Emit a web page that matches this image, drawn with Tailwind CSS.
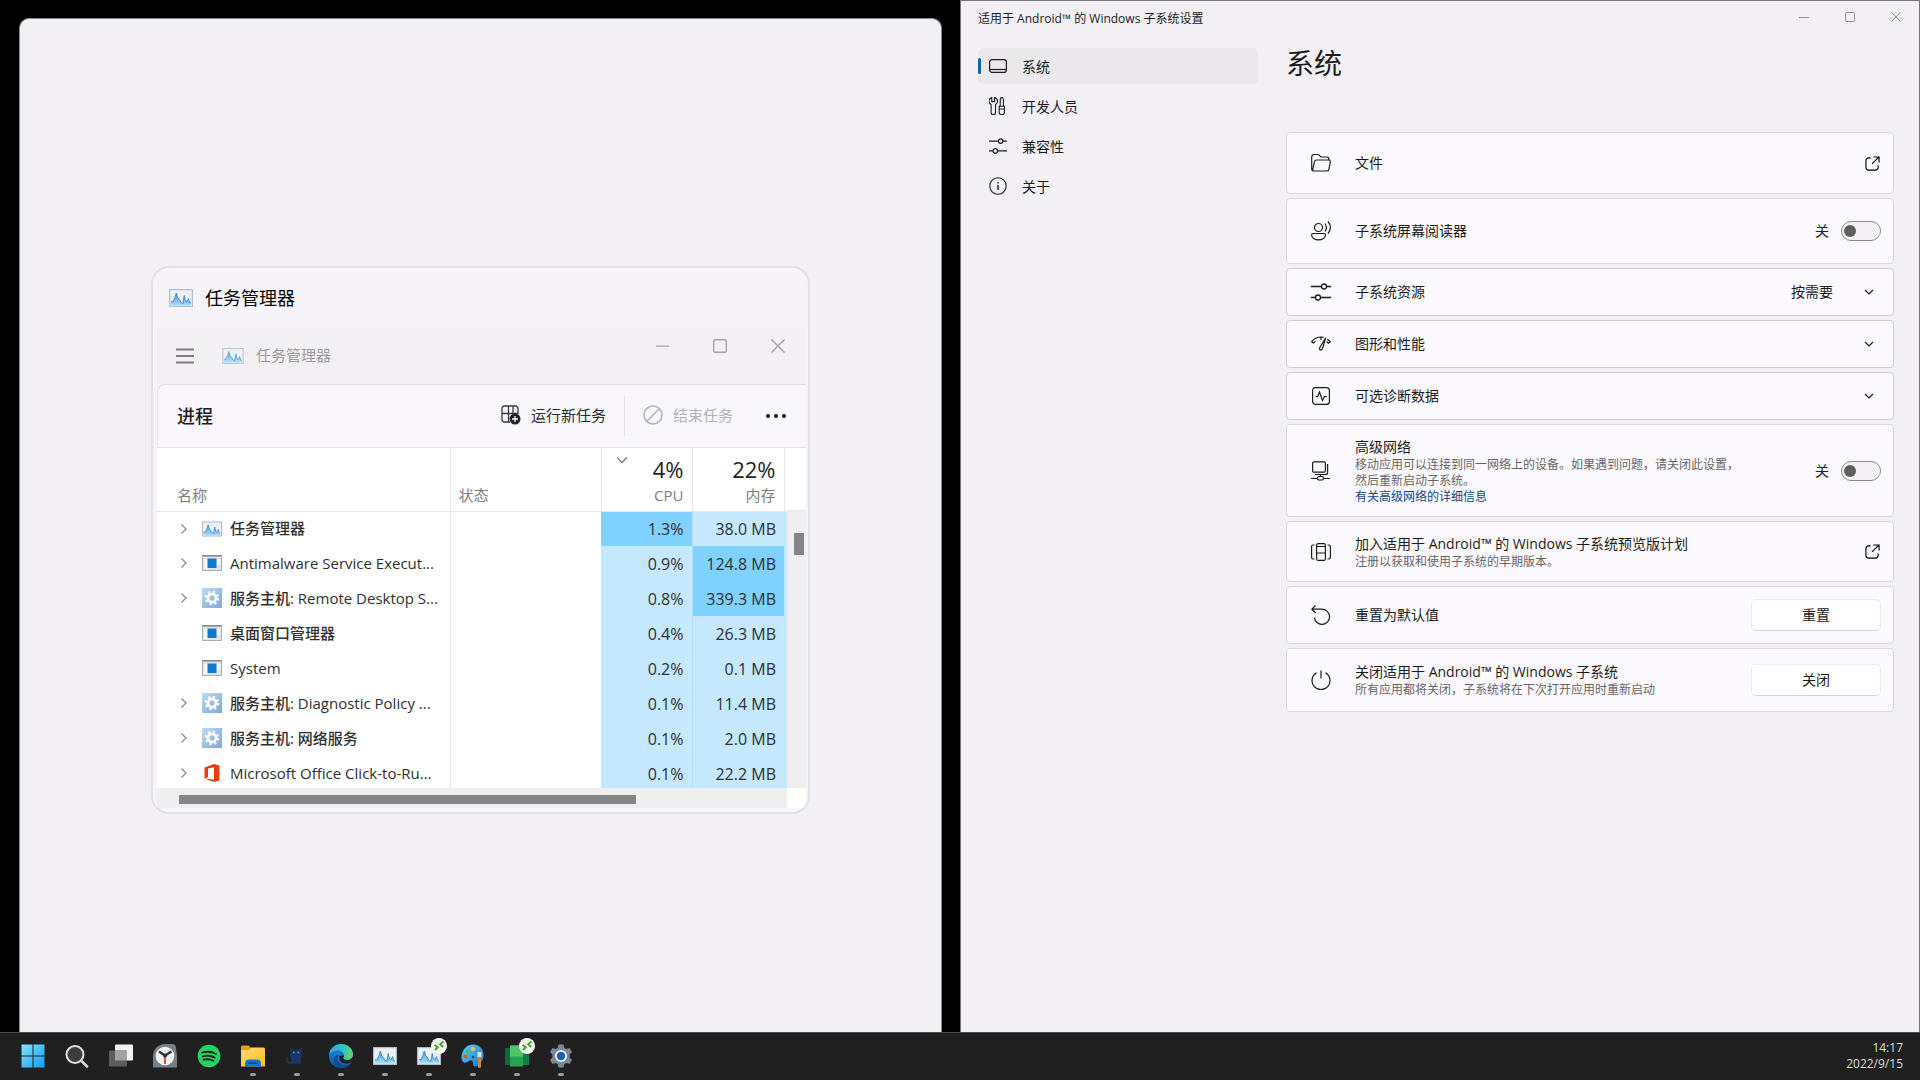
<!DOCTYPE html>
<html lang="zh-CN">
<head>
    <meta charset="UTF-8">
    <meta name="viewport" content="width=device-width, initial-scale=1.0">
    <title>适用于 Android™ 的 Windows 子系统设置</title>
    <script src="https://cdn.jsdelivr.net/npm/@tailwindcss/browser@4"></script>
</head>
<body class="flex h-screen flex-col overflow-hidden bg-black font-['Open_Sans','Noto_Sans_CJK_SC',sans-serif] text-sm text-[#1b1b1b]">

    <!-- 共用图标 -->
    <svg class="absolute size-0" aria-hidden="true">
        <defs>
            <linearGradient id="g-win" gradientUnits="userSpaceOnUse" x1="0" y1="0" x2="24" y2="24"><stop offset="0" stop-color="#8ae4fd"/><stop offset="1" stop-color="#0a9bfa"/></linearGradient>
            <linearGradient id="g-chart" x1="0" y1="0" x2="0" y2="1"><stop offset="0" stop-color="#2e8fd8"/><stop offset="1" stop-color="#a5dcfb"/></linearGradient>
            <linearGradient id="g-gear" x1="0" y1="0" x2="1" y2="1"><stop offset="0" stop-color="#bfdcf2"/><stop offset="1" stop-color="#7ea6dc"/></linearGradient>
            <linearGradient id="g-edge1" x1="0" y1="0" x2="1" y2="0"><stop offset="0" stop-color="#2ba8e6"/><stop offset=".6" stop-color="#35c1c6"/><stop offset="1" stop-color="#62dc54"/></linearGradient>
            <linearGradient id="g-edge2" x1="0" y1="0" x2="0" y2="1"><stop offset="0" stop-color="#1c8fe0"/><stop offset="1" stop-color="#0d57a8"/></linearGradient>
            <linearGradient id="g-folder" x1="0" y1="0" x2="1" y2="1"><stop offset="0" stop-color="#ffdd6b"/><stop offset="1" stop-color="#fdbb2a"/></linearGradient>
            <linearGradient id="g-paint" x1="0" y1="0" x2="1" y2="1"><stop offset="0" stop-color="#5bd0f6"/><stop offset="1" stop-color="#1578cf"/></linearGradient>
        </defs>
        <symbol id="i-taskmgr" viewBox="0 0 24 18">
            <rect x=".6" y=".6" width="22.800" height="16.800" fill="#edf1f5" stroke="#b3bcc5" stroke-width="1.200"/>
            <path d="M2 16.500v-4l2 .5 2-4.500 1.300-4.500 1.400 5 1.300 1 2 3.500 2 1 1.200-8 1.300 5.500 1.500 1 1.500-3.500 1 4 1.500 .5v2.500z" fill="url(#g-chart)" opacity=".9"/>
            <path d="M2 12.500l2 .5 2-4.500 1.300-4.500 1.400 5 1.300 1 2 3.500 2 1 1.200-8 1.300 5.500 1.500 1 1.500-3.500 1 4 1.500 .5" fill="none" stroke="#3b8fd0" stroke-width="1"/>
        </symbol>
        <symbol id="i-window" viewBox="0 0 20 16">
            <rect x=".5" y=".5" width="19" height="15" fill="#e3e6e9" stroke="#a9adb1"/>
            <path d="M.5 .8h19" stroke="#85898d" stroke-width="1.600"/>
            <path d="M2 4h4v10H2zM14 4h4v6h-4z" fill="#f6f8fa"/>
            <rect x="5.500" y="3.500" width="9" height="9.500" fill="#0f78d0"/>
        </symbol>
        <symbol id="i-service" viewBox="0 0 20 20">
            <rect width="20" height="20" fill="url(#g-gear)"/>
            <circle cx="10" cy="10" r="4" fill="none" stroke="#fff" stroke-width="2.600"/>
            <circle cx="10" cy="10" r="6.200" fill="none" stroke="#fff" stroke-width="2" stroke-dasharray="2.400 2.470"/>
        </symbol>
        <symbol id="i-office" viewBox="0 0 20 20">
            <path d="M2.500 4.500L12 1l5.500 1.600v14.800L12 19l-9.500-3.500 9.500 1V4.200L6 5.600v8.600l-3.500 1.300z" fill="#e8400f"/>
        </symbol>
        <symbol id="i-right" viewBox="0 0 8 12"><path d="M1.500 1.500L6 6l-4.500 4.500" fill="none" stroke="#8f8f8f" stroke-width="1.400"/></symbol>
        <symbol id="i-down" viewBox="0 0 10 10"><path d="M1 3l4 4 4-4" fill="none" stroke="currentColor" stroke-width="1.200"/></symbol>
        <symbol id="i-sliders" viewBox="0 0 20 20">
            <g fill="none" stroke="currentColor" stroke-width="1.300">
                <path d="M0 4.500h10.500M15.500 4.500H20M0 15.500h4.500M9.500 15.500H20"/><circle cx="13" cy="4.500" r="2.500"/><circle cx="7" cy="15.500" r="2.500"/>
            </g>
        </symbol>
        <symbol id="i-external" viewBox="0 0 16 16">
            <path d="M6 2H4a3 3 0 0 0-3 3v7a3 3 0 0 0 3 3h7a3 3 0 0 0 3-3v-2M9 1h6v6M15 1L7.500 8.500" fill="none" stroke="currentColor" stroke-width="1.200"/>
        </symbol>
        <symbol id="i-min" viewBox="0 0 10 10"><path d="M0 5.500h10" stroke="currentColor" fill="none"/></symbol>
        <symbol id="i-max" viewBox="0 0 10 10"><rect x=".5" y=".5" width="9" height="9" rx="1" stroke="currentColor" fill="none"/></symbol>
        <symbol id="i-close" viewBox="0 0 10 10"><path d="M.3 .3l9.400 9.400M9.700 .3L.3 9.700" stroke="currentColor" fill="none"/></symbol>
        <symbol id="i-remote" viewBox="0 0 16 16">
            <circle cx="8" cy="8" r="8" fill="#f5f5f3"/>
            <path d="M3.500 7l3.200 2.300L4 12M12.500 3.500L9.200 6.200 12.300 9" fill="none" stroke="#45a12d" stroke-width="2"/>
        </symbol>
    </svg>

    <main class="flex min-h-0 flex-1">
        <!-- 左侧: 贴靠预览 -->
        <section class="min-w-0 flex-1 pt-[18px] pr-[18px] pl-[19px]">
            <div class="flex h-full items-center justify-center rounded-t-[10px] border border-b-0 border-[#8a888b] bg-[#f2f0f4] pt-7">
                <article class="w-[659px] overflow-hidden rounded-[18px] border-2 border-[#e4e2e6] bg-[#f6f4f8] pr-0.5 pb-1 pl-1">
                    <header class="flex h-[60px] items-center gap-3 px-3">
                        <svg class="h-[18px] w-6"><use href="#i-taskmgr"/></svg>
                        <h2 class="text-lg text-black">任务管理器</h2>
                    </header>

                    <div class="flex h-14 items-start justify-between bg-[#f2f0f3]">
                        <div class="flex h-14 items-center pl-[19px]">
                            <button aria-label="菜单" class="text-[#7d7c7e]"><svg class="h-4 w-[18px]" viewBox="0 0 18 16"><path d="M0 1.500h18M0 8h18M0 14.500h18" stroke="currentColor" stroke-width="2"/></svg></button>
                            <svg class="ml-7 h-4 w-[22px] opacity-80"><use href="#i-taskmgr"/></svg>
                            <span class="ml-3 text-[15px] text-[#9c9b9d]">任务管理器</span>
                        </div>
                        <div class="flex h-9 items-center gap-11 pr-[21px] text-[#a3a2a4]">
                            <button aria-label="最小化"><svg class="size-[13px]"><use href="#i-min"/></svg></button>
                            <button aria-label="最大化"><svg class="size-[14px]"><use href="#i-max"/></svg></button>
                            <button aria-label="关闭"><svg class="size-[14px]"><use href="#i-close"/></svg></button>
                        </div>
                    </div>

                    <div class="flex h-[63px] items-center rounded-tl-lg border-t border-l border-[#e4e2e5] bg-[#f9f7fb] pr-[19px] pl-[19px] text-[15px]">
                        <h3 class="text-lg font-medium">进程</h3>
                        <button class="ml-auto flex items-center gap-[10px] text-[#2c2c2c]">
                            <svg class="size-5" viewBox="0 0 20 20" fill="none" stroke="#3a3a3a" stroke-width="1.300"><path d="M9 17H3.500A2.500 2.500 0 0 1 1 14.500v-11A2.500 2.500 0 0 1 3.500 1h11A2.500 2.500 0 0 1 17 3.500V9M1 8.500h16M7.500 1v16M12 1v7.500"/><circle cx="14" cy="14" r="5.500" fill="#222" stroke="none"/><path d="M11 14h6M14 11v6" stroke="#fff"/></svg>
                            运行新任务
                        </button>
                        <span class="mx-[18px] h-10 w-px bg-[#e2e0e4]"></span>
                        <button class="flex items-center gap-[10px] text-[#b3b2b5]" disabled>
                            <svg class="size-5" viewBox="0 0 20 20" fill="none" stroke="#b3b2b5" stroke-width="1.500"><circle cx="10" cy="10" r="9"/><path d="M4 16L16 4"/></svg>
                            结束任务
                        </button>
                        <button aria-label="更多" class="ml-8"><svg class="h-5 w-[22px]" viewBox="0 0 22 20" fill="#1b1b1b"><circle cx="3" cy="10" r="2"/><circle cx="11" cy="10" r="2"/><circle cx="19" cy="10" r="2"/></svg></button>
                    </div>

                    <div class="flex h-[341px] overflow-hidden bg-white">
                        <table class="w-[630px] table-fixed self-start text-[15px] text-[#2f2f2f]">
                            <colgroup><col class="w-[293px]"><col class="w-[151px]"><col class="w-[91px]"><col class="w-[92px]"><col class="w-[3px]"></colgroup>
                            <thead class="text-[#7e7e7e]">
                                <tr class="h-16 border-t border-b border-[#e6e4e7] align-bottom">
                                    <th class="border-r border-[#e6e4e7] pb-1 pl-5 text-left font-normal">名称</th>
                                    <th class="border-r border-[#e6e4e7] pb-1 pl-2 text-left font-normal">状态</th>
                                    <th class="relative border-r border-[#e6e4e7] pr-2 pb-1 text-right font-normal"><svg class="absolute top-1.5 left-3.5 size-3"><use href="#i-down"/></svg><span class="block text-[22px] leading-8 text-[#1f1f1f]">4%</span><span class="block">CPU</span></th>
                                    <th class="border-r border-[#e6e4e7] pr-2 pb-1 text-right font-normal"><span class="block text-[22px] leading-8 text-[#1f1f1f]">22%</span><span class="block">内存</span></th>
                                    <th></th>
                                </tr>
                            </thead>
                            <tbody>
                                <tr class="h-[35px]">
                                    <td class="border-r border-[#e6e4e7] pl-[23px] font-medium"><div class="flex items-center whitespace-nowrap"><svg class="mr-3.5 h-3 w-2"><use href="#i-right"/></svg><svg class="mr-2 h-4 w-5"><use href="#i-taskmgr"/></svg>任务管理器</div></td>
                                    <td></td><td class="bg-[#7fd1ff] pr-2 text-right text-base">1.3%</td><td class="border-l border-[#b9def5] bg-[#c5e8ff] pr-2 text-right text-base">38.0 MB</td><td class="bg-[#c5e8ff]"></td>
                                </tr>
                                <tr class="h-[35px]">
                                    <td class="border-r border-[#e6e4e7] pl-[23px] font-medium"><div class="flex items-center whitespace-nowrap"><svg class="mr-3.5 h-3 w-2"><use href="#i-right"/></svg><svg class="mr-2 h-4 w-5"><use href="#i-window"/></svg>Antimalware Service Execut...</div></td>
                                    <td></td><td class="bg-[#c5e8ff] pr-2 text-right text-base">0.9%</td><td class="border-l border-[#b9def5] bg-[#7fd1ff] pr-2 text-right text-base">124.8 MB</td><td class="bg-[#c5e8ff]"></td>
                                </tr>
                                <tr class="h-[35px]">
                                    <td class="border-r border-[#e6e4e7] pl-[23px] font-medium"><div class="flex items-center whitespace-nowrap"><svg class="mr-3.5 h-3 w-2"><use href="#i-right"/></svg><svg class="mr-2 size-5"><use href="#i-service"/></svg>服务主机: Remote Desktop S...</div></td>
                                    <td></td><td class="bg-[#c5e8ff] pr-2 text-right text-base">0.8%</td><td class="border-l border-[#b9def5] bg-[#7fd1ff] pr-2 text-right text-base">339.3 MB</td><td class="bg-[#c5e8ff]"></td>
                                </tr>
                                <tr class="h-[35px]">
                                    <td class="border-r border-[#e6e4e7] pl-[45px] font-medium"><div class="flex items-center whitespace-nowrap"><svg class="mr-2 h-4 w-5"><use href="#i-window"/></svg>桌面窗口管理器</div></td>
                                    <td></td><td class="bg-[#c5e8ff] pr-2 text-right text-base">0.4%</td><td class="border-l border-[#b9def5] bg-[#c5e8ff] pr-2 text-right text-base">26.3 MB</td><td class="bg-[#c5e8ff]"></td>
                                </tr>
                                <tr class="h-[35px]">
                                    <td class="border-r border-[#e6e4e7] pl-[45px] font-medium"><div class="flex items-center whitespace-nowrap"><svg class="mr-2 h-4 w-5"><use href="#i-window"/></svg>System</div></td>
                                    <td></td><td class="bg-[#c5e8ff] pr-2 text-right text-base">0.2%</td><td class="border-l border-[#b9def5] bg-[#c5e8ff] pr-2 text-right text-base">0.1 MB</td><td class="bg-[#c5e8ff]"></td>
                                </tr>
                                <tr class="h-[35px]">
                                    <td class="border-r border-[#e6e4e7] pl-[23px] font-medium"><div class="flex items-center whitespace-nowrap"><svg class="mr-3.5 h-3 w-2"><use href="#i-right"/></svg><svg class="mr-2 size-5"><use href="#i-service"/></svg>服务主机: Diagnostic Policy ...</div></td>
                                    <td></td><td class="bg-[#c5e8ff] pr-2 text-right text-base">0.1%</td><td class="border-l border-[#b9def5] bg-[#c5e8ff] pr-2 text-right text-base">11.4 MB</td><td class="bg-[#c5e8ff]"></td>
                                </tr>
                                <tr class="h-[35px]">
                                    <td class="border-r border-[#e6e4e7] pl-[23px] font-medium"><div class="flex items-center whitespace-nowrap"><svg class="mr-3.5 h-3 w-2"><use href="#i-right"/></svg><svg class="mr-2 size-5"><use href="#i-service"/></svg>服务主机: 网络服务</div></td>
                                    <td></td><td class="bg-[#c5e8ff] pr-2 text-right text-base">0.1%</td><td class="border-l border-[#b9def5] bg-[#c5e8ff] pr-2 text-right text-base">2.0 MB</td><td class="bg-[#c5e8ff]"></td>
                                </tr>
                                <tr class="h-[35px]">
                                    <td class="border-r border-[#e6e4e7] pl-[23px] font-medium"><div class="flex items-center whitespace-nowrap"><svg class="mr-3.5 h-3 w-2"><use href="#i-right"/></svg><svg class="mr-2 size-5"><use href="#i-office"/></svg>Microsoft Office Click-to-Ru...</div></td>
                                    <td></td><td class="bg-[#c5e8ff] pr-2 text-right text-base">0.1%</td><td class="border-l border-[#b9def5] bg-[#c5e8ff] pr-2 text-right text-base">22.2 MB</td><td class="bg-[#c5e8ff]"></td>
                                </tr>
                            </tbody>
                        </table>
                        <div class="flex flex-1 flex-col">
                            <div class="h-16 border-t border-b border-[#e6e4e7]"></div>
                            <div class="flex-1 bg-[#f0eff0] pt-[22px] pl-[7px]"><div class="h-[22px] w-[10px] bg-[#858585]"></div></div>
                        </div>
                    </div>
                    <div class="flex h-5 bg-white"><div class="w-[630px] bg-[#f0eff0] pt-[7px] pl-[22px]"><div class="h-[9px] w-[457px] bg-[#858585]"></div></div></div>
                </article>
            </div>
        </section>

        <!-- 右侧: 设置窗口 -->
        <section class="flex w-1/2 flex-col border border-b-0 border-[#77757a] bg-[#f2f0f4]">
            <header class="flex h-[34px] shrink-0 items-start justify-between pl-[17px]">
                <h2 class="text-xs leading-9">适用于 Android™ 的 Windows 子系统设置</h2>
                <div class="flex text-[#929093]">
                    <button aria-label="最小化" class="flex h-8 w-[46px] items-center justify-center"><svg class="size-[10px]"><use href="#i-min"/></svg></button>
                    <button aria-label="最大化" class="flex h-8 w-[46px] items-center justify-center"><svg class="size-[10px]"><use href="#i-max"/></svg></button>
                    <button aria-label="关闭" class="flex h-8 w-[46px] items-center justify-center"><svg class="size-[10px]"><use href="#i-close"/></svg></button>
                </div>
            </header>

            <div class="flex flex-1 gap-7 pr-[25px] pl-[17px]">
                <nav class="flex w-[280px] shrink-0 flex-col gap-1 pt-[13px]">
                    <a href="#" class="relative flex h-9 items-center gap-[15px] rounded-[5px] bg-[#eae8ea] pl-[11px]">
                        <span class="absolute left-0 h-4 w-[3px] rounded-full bg-[#0f62b0]"></span>
                        <svg class="size-[18px]" viewBox="0 0 18 18" fill="none" stroke="currentColor" stroke-width="1.200"><rect x=".6" y="2.600" width="16.800" height="12.800" rx="2.500"/><path d="M.6 12.500h16.800"/></svg>
                        <span class="pt-px">系统</span>
                    </a>
                    <a href="#" class="flex h-9 items-center gap-[15px] rounded-[5px] pl-[11px]">
                        <svg class="size-[18px]" viewBox="0 0 18 18" fill="none" stroke="currentColor" stroke-width="1.100"><path d="M2.800 .6v4h2.800v-4a3.600 3.600 0 0 1 .9 6.800v8.200a2.200 2.200 0 0 1-4.400 0V7.400A3.600 3.600 0 0 1 2.800 .6zM11.200 9.200V2.800L12 .6h1.600l.8 2.200v6.400M10.200 9.200h5.200v6a2.600 2.600 0 0 1-5.200 0zM10.200 12h5.200"/></svg>
                        <span class="pt-px">开发人员</span>
                    </a>
                    <a href="#" class="flex h-9 items-center gap-[15px] rounded-[5px] pl-[11px]">
                        <svg class="size-[18px]"><use href="#i-sliders"/></svg>
                        <span class="pt-px">兼容性</span>
                    </a>
                    <a href="#" class="flex h-9 items-center gap-[15px] rounded-[5px] pl-[11px]">
                        <svg class="size-[18px]" viewBox="0 0 18 18" fill="none" stroke="currentColor" stroke-width="1.100"><circle cx="9" cy="9" r="8.200"/><path d="M9 8v5M9 5v1.400" stroke-width="1.400"/></svg>
                        <span class="pt-px">关于</span>
                    </a>
                </nav>

                <div class="min-w-0 flex-1 pt-[10px]">
                    <h1 class="mb-[51px] text-[28px] leading-9">系统</h1>

                    <div class="flex flex-col gap-1">
                        <a href="#" class="flex h-[62px] items-center rounded border border-[#dad8dc] bg-[#fbf9fd] pr-3 pl-6">
                            <svg class="mr-6 size-5" viewBox="0 0 20 20" fill="none" stroke="currentColor" stroke-width="1.200"><path d="M2.500 18A1.800 1.800 0 0 1 .7 16V4A2.500 2.500 0 0 1 3.200 1.500h3.300c.7 0 1.200.2 1.700.7L10 4h5.500A2.500 2.500 0 0 1 18 6.500v.8M5.600 7h12.200c1 0 1.700.9 1.500 1.900l-1.300 7.300a2.200 2.200 0 0 1-2.200 1.800H2.900c-.9 0-1.300-.7-1.100-1.600l1.600-7.600A2.200 2.200 0 0 1 5.600 7z"/></svg>
                            文件
                            <svg class="mr-px ml-auto size-[15px] text-black"><use href="#i-external"/></svg>
                        </a>
                        <label class="flex h-[66px] items-center rounded border border-[#dad8dc] bg-[#fbf9fd] pr-3 pl-6">
                            <svg class="mr-6 size-5" viewBox="0 0 20 20" fill="none" stroke="currentColor" stroke-width="1.200"><circle cx="7.500" cy="6.500" r="4"/><path d="M2 12.500h11c.9 0 1.500.6 1.500 1.400 0 2.800-3.200 5-7 5S.6 16.700 .6 13.900C.6 13.100 1.200 12.500 2 12.500zM14 2.500c1.600 2.300 1.600 5.700 0 8M17 .5c3.200 3.500 3.200 8.500 0 12"/></svg>
                            子系统屏幕阅读器
                            <span class="mr-3 ml-auto">关</span>
                            <input type="checkbox" role="switch" class="h-5 w-10 appearance-none rounded-full border border-[#8a898b] bg-[#f4f2f5] before:mt-[3px] before:ml-0.5 before:block before:size-3 before:rounded-full before:bg-[#5d5c5e]">
                        </label>
                        <button class="flex h-12 items-center rounded border border-[#cfcdd1] bg-[#fbf9fd] pr-[19px] pl-6">
                            <svg class="mr-6 size-5"><use href="#i-sliders"/></svg>
                            子系统资源
                            <span class="mr-[31px] ml-auto">按需要</span>
                            <svg class="size-[10px]"><use href="#i-down"/></svg>
                        </button>
                        <button class="flex h-12 items-center rounded border border-[#cfcdd1] bg-[#fbf9fd] pr-[19px] pl-6">
                            <svg class="mr-6 size-5" viewBox="0 0 20 20" fill="none" stroke="currentColor" stroke-width="1.200"><path d="M2.600 9.200L.6 7.800C3 4.600 6.300 3 10 3c1 0 1.800.1 2.600.3M2.600 9.200l1.800-2M10 3v3M16.300 5.200c1.200.8 2.200 1.600 3 2.600l-2 1.400-1.600-1.700M14.700 3.800L9 13.200c-.7 1.200-.6 2.300.3 2.700.9.400 1.800-.1 2.200-1.400z"/></svg>
                            图形和性能
                            <svg class="ml-auto size-[10px]"><use href="#i-down"/></svg>
                        </button>
                        <button class="flex h-12 items-center rounded border border-[#cfcdd1] bg-[#fbf9fd] pr-[19px] pl-6">
                            <svg class="mr-6 size-5" viewBox="0 0 20 20" fill="none" stroke="currentColor" stroke-width="1.200"><rect x="1.600" y="1.600" width="16.800" height="16.800" rx="3"/><path d="M4.500 10.500h2.200l1.800-4.500 3 8.500 2-4h2.500"/></svg>
                            可选诊断数据
                            <svg class="ml-auto size-[10px]"><use href="#i-down"/></svg>
                        </button>
                        <div class="flex h-[93px] items-center rounded border border-[#dad8dc] bg-[#fbf9fd] pr-3 pl-6">
                            <svg class="mr-6 size-5" viewBox="0 0 20 20" fill="none" stroke="currentColor" stroke-width="1.200"><rect x="1.600" y=".8" width="12.800" height="10.400" rx="1.500"/><path d="M16.600 3v8.500a2 2 0 0 1-2 2H4M9.500 13.500v2M0 17.500h6M13 17.500h6M6 17.500l1.500-2h4l1.500 2-1.500 1.500h-4z"/></svg>
                            <div class="max-w-[390px] text-xs leading-4 text-[#666567]">
                                <label for="adv-net" class="block text-sm leading-5 text-[#1b1b1b]">高级网络</label>
                                <p>移动应用可以连接到同一网络上的设备。如果遇到问题，请关闭此设置，然后重新启动子系统。</p>
                                <a href="#" class="block text-[#0a478c]">有关高级网络的详细信息</a>
                            </div>
                            <span class="mr-3 ml-auto">关</span>
                            <input id="adv-net" type="checkbox" role="switch" class="h-5 w-10 appearance-none rounded-full border border-[#8a898b] bg-[#f4f2f5] before:mt-[3px] before:ml-0.5 before:block before:size-3 before:rounded-full before:bg-[#5d5c5e]">
                        </div>
                        <a href="#" class="flex h-[61px] items-center rounded border border-[#dad8dc] bg-[#fbf9fd] pr-3 pl-6">
                            <svg class="mr-6 size-5" viewBox="0 0 20 20" fill="none" stroke="currentColor" stroke-width="1.200"><rect x="5.600" y="1.600" width="8.800" height="16.800" rx="1.500"/><path d="M5.600 4.500h8.800M5.600 11h8.800M3.500 3H2a1.400 1.400 0 0 0-1.400 1.400v11.200A1.400 1.400 0 0 0 2 17h1.500M16.500 3H18a1.400 1.400 0 0 1 1.400 1.400v11.200A1.400 1.400 0 0 1 18 17h-1.500"/></svg>
                            <span>
                                <span class="block leading-5">加入适用于 Android™ 的 Windows 子系统预览版计划</span>
                                <span class="block text-xs leading-4 text-[#666567]">注册以获取和使用子系统的早期版本。</span>
                            </span>
                            <svg class="mr-px ml-auto size-[15px] text-black"><use href="#i-external"/></svg>
                        </a>
                        <div class="flex h-[58px] items-center rounded border border-[#dad8dc] bg-[#fbf9fd] pr-3 pl-6">
                            <svg class="mr-6 size-5" viewBox="0 0 20 20" fill="none" stroke="currentColor" stroke-width="1.200"><path d="M4.500 .5L.8 4.200l4 3.800M1 4.200h10a7.600 7.600 0 1 1-7.600 8.300"/></svg>
                            重置为默认值
                            <button class="ml-auto h-8 w-[130px] rounded-[5px] border border-[#eeecef] border-b-[#d6d4d8] bg-white">重置</button>
                        </div>
                        <div class="flex h-16 items-center rounded border border-[#dad8dc] bg-[#fbf9fd] pr-3 pl-6">
                            <svg class="mr-6 size-5" viewBox="0 0 20 20" fill="none" stroke="currentColor" stroke-width="1.200"><path d="M10 .5v8M5.500 2.800a9 9 0 1 0 9 0"/></svg>
                            <div>
                                <p class="leading-5">关闭适用于 Android™ 的 Windows 子系统</p>
                                <p class="text-xs leading-4 text-[#666567]">所有应用都将关闭，子系统将在下次打开应用时重新启动</p>
                            </div>
                            <button class="ml-auto h-8 w-[130px] rounded-[5px] border border-[#eeecef] border-b-[#d6d4d8] bg-white">关闭</button>
                        </div>
                    </div>
                </div>
            </div>
        </section>
    </main>

    <!-- 任务栏 -->
    <footer class="flex h-12 shrink-0 items-center justify-between border-t border-[#4a4a4a] bg-[#202020] pr-[17px] pb-0.5 pl-[11px]">
        <div class="flex">
            <button aria-label="开始" class="flex h-12 w-11 items-center justify-center"><svg class="size-6" viewBox="0 0 24 24" fill="url(#g-win)"><path d="M.5 .5h11v11H.5zM12.500 .5h11v11h-11zM.5 12.500h11v11H.5zM12.500 12.500h11v11h-11z"/></svg></button>
            <button aria-label="搜索" class="flex h-12 w-11 items-center justify-center"><svg class="size-6" viewBox="0 0 24 24"><circle cx="10" cy="10.500" r="8.500" fill="#3d3d3d" stroke="#e2e2e2" stroke-width="2"/><path d="M16.500 17l5.500 5.500" stroke="#d5d5d5" stroke-width="2.600" stroke-linecap="round"/></svg></button>
            <button aria-label="任务视图" class="flex h-12 w-11 items-center justify-center"><svg class="size-6" viewBox="0 0 24 24"><rect x="6" y=".5" width="18" height="16" rx="1" fill="#f1f1f1"/><rect x="0" y="6.500" width="18" height="16" rx="1" fill="#5d5d5d"/><path d="M6 6.500h12v10H6z" fill="#a2a2a2"/></svg></button>
            <button aria-label="时钟" class="flex h-12 w-11 items-center justify-center"><svg class="size-6" viewBox="0 0 24 24"><path d="M0 23.500V12A12 12 0 0 1 12 0h7a4 4 0 0 1 4 4l1 8v11.500z" fill="#75808a"/><circle cx="12" cy="12" r="9.300" fill="#f2f2f2"/><path d="M6 7.500l6 4 6.500-4" fill="none" stroke="#303438" stroke-width="2.400"/><path d="M12 11v9" stroke="#e2521c" stroke-width="2"/><circle cx="12" cy="11.500" r="2" fill="#303438"/></svg></button>
            <button aria-label="Spotify" class="flex h-12 w-11 items-center justify-center"><svg class="size-6" viewBox="0 0 24 24"><circle cx="12" cy="12" r="11.300" fill="#1ed760"/><path d="M5 8.600c4.800-1.400 10-.9 14 1.400M5.800 12.300c4.200-1.100 8.400-.7 11.800 1.300M6.500 15.700c3.500-.9 6.900-.6 9.800 1.100" fill="none" stroke="#17201a" stroke-width="1.900" stroke-linecap="round"/></svg></button>
            <button aria-label="文件资源管理器" class="relative flex h-12 w-11 items-center justify-center"><svg class="size-6" viewBox="0 0 24 24"><path d="M0 3a1.500 1.500 0 0 1 1.500-1.500h6L10 4v5H0z" fill="#e3a018"/><path d="M0 6h8l2-2.500h12.500A1.500 1.500 0 0 1 24 5v17.500H0z" fill="url(#g-folder)"/><path d="M4 22.500v-3a4 4 0 0 1 4-4h8a4 4 0 0 1 4 4v3z" fill="#1177cc"/><path d="M8 19h8" stroke="#0a4a8c" stroke-width="1.400" stroke-linecap="round"/></svg><span class="absolute bottom-1 h-[3px] w-1.5 rounded-full bg-[#9b9b9b]"></span></button>
            <button aria-label="猫" class="relative flex h-12 w-11 items-center justify-center"><svg class="size-6" viewBox="0 0 24 24"><path d="M6 3l3 3h4l4-3v8l-1 3v5H6v-4l-1-4z" fill="#1b3461"/><path d="M3 13c-2 2-2 6 3 6h10" fill="none" stroke="#1b3461" stroke-width="1.600"/><path d="M8 8.500h1.500M12.500 8.500H14" stroke="#5c9cd4" stroke-width="1.300"/></svg><span class="absolute bottom-1 h-[3px] w-1.5 rounded-full bg-[#9b9b9b]"></span></button>
            <button aria-label="Edge" class="relative flex h-12 w-11 items-center justify-center"><svg class="size-6" viewBox="0 0 24 24"><circle cx="12" cy="12" r="12" fill="url(#g-edge2)"/><path d="M.2 10.500C1 4.500 6 0 12 0c7 0 12 5 12 10.500 0 3.500-2.600 5.500-5.500 5.500-2.700 0-4.300-1-4.300-2 0-.8.8-1.300.8-2.700C15 8.500 12.300 6.500 9 6.500 4.800 6.500 1.500 8.300 .2 10.500z" fill="url(#g-edge1)"/><path d="M9.500 11c-1.800 2.500-1.700 6.500 2 9 3.300 2 7.500 1.400 10.500-1-2.200 3.500-6 5-10 5C6.500 24 4.500 19 4.500 16s2-5 5-5z" fill="#124a91"/><path d="M15 11.300c0 1.400-.8 1.900-.8 2.700 0 1 1.600 2 4.300 2 2.300 0 4.400-1.200 5.200-3.400l.3 2.400-1.500 3.200c-1.500.8-3.300 1.300-5.500 1.300-4.500 0-7.500-3.500-6.500-7.500z" fill="#202020"/></svg><span class="absolute bottom-1 h-[3px] w-1.5 rounded-full bg-[#9b9b9b]"></span></button>
            <button aria-label="任务管理器" class="relative flex h-12 w-11 items-center justify-center"><svg class="h-[18px] w-6"><use href="#i-taskmgr"/></svg><span class="absolute bottom-1 h-[3px] w-1.5 rounded-full bg-[#9b9b9b]"></span></button>
            <button aria-label="任务管理器 (远程)" class="relative flex h-12 w-11 items-center justify-center"><svg class="h-[18px] w-6"><use href="#i-taskmgr"/></svg><svg class="absolute top-1.5 right-1 size-4"><use href="#i-remote"/></svg><span class="absolute bottom-1 h-[3px] w-1.5 rounded-full bg-[#9b9b9b]"></span></button>
            <button aria-label="画图" class="relative flex h-12 w-11 items-center justify-center"><svg class="size-6" viewBox="0 0 24 24"><path d="M12 .5C19 .5 23 6 22.500 12c-.5 5-4.500 10.500-8.500 10.500-3 0-1-5-3.500-6S6 20 3 18.500C.5 17 0 13.500 1 10 2.500 4.500 6.500 .5 12 .5z" fill="url(#g-paint)"/><circle cx="12" cy="5" r="2" fill="#f6c636"/><circle cx="6.500" cy="7.500" r="2" fill="#50b848"/><circle cx="4.500" cy="12.500" r="2" fill="#d8573a"/><circle cx="12" cy="13" r="1.200" fill="#134a86"/><path d="M16.500 8h4v6h-4z" fill="#dcdcdc"/><path d="M17 13h3v9.500a1.500 1.500 0 0 1-3 0z" fill="#c98a3c"/></svg><span class="absolute bottom-1 h-[3px] w-1.5 rounded-full bg-[#9b9b9b]"></span></button>
            <button aria-label="远程应用" class="relative flex h-12 w-11 items-center justify-center"><svg class="size-6" viewBox="0 0 24 24"><rect x="0" y="4" width="8" height="17" rx="1" fill="#0c6b38"/><rect x="15" y="4" width="9" height="17" rx="1" fill="#0f7f41"/><rect x="5" y="1.500" width="13" height="21" rx="1" fill="#25a352"/><path d="M5 1.500h13v11H5z" fill="#4cc667"/></svg><svg class="absolute top-1.5 right-1 size-4"><use href="#i-remote"/></svg><span class="absolute bottom-1 h-[3px] w-1.5 rounded-full bg-[#9b9b9b]"></span></button>
            <button aria-label="设置" class="relative flex h-12 w-11 items-center justify-center"><svg class="size-6" viewBox="0 0 24 24"><path d="M9.500 .5h5l.8 3.300 2 1.100 3.200-1 2.500 4.300-2.400 2.300v3l2.400 2.300-2.500 4.300-3.200-1-2 1.100-.8 3.300h-5l-.8-3.300-2-1.100-3.200 1L1 15.800l2.400-2.300v-3L1 8.200l2.500-4.300 3.200 1 2-1.100z" fill="#7b8794"/><circle cx="12" cy="12" r="6" fill="#f1f3f5"/><circle cx="12" cy="12" r="4.200" fill="#1461b5"/></svg><span class="absolute bottom-1 h-[3px] w-1.5 rounded-full bg-[#9b9b9b]"></span></button>
        </div>
        <time datetime="2022-09-15T14:17" class="text-right text-xs leading-4 text-[#dedede]">14:17<br>2022/9/15</time>
    </footer>
</body>
</html>
